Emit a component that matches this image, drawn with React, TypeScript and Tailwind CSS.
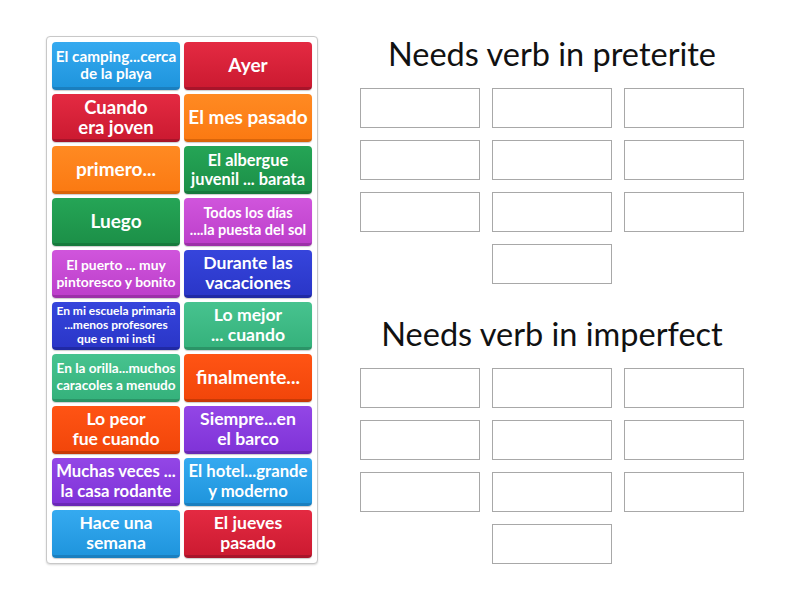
import React from "react";

type Tile = { text: string[]; color: string; size: string };

const C = {
  blue: "bg-gradient-to-b from-[#35aaf0] to-[#1f95dd] border-b-[3px] border-[#1a7fbf]",
  red: "bg-gradient-to-b from-[#e42a42] to-[#cc1a31] border-b-[3px] border-[#a8142a]",
  orange: "bg-gradient-to-b from-[#ff8a22] to-[#fb7a12] border-b-[3px] border-[#d9650a]",
  green: "bg-gradient-to-b from-[#25a556] to-[#1c9048] border-b-[3px] border-[#167a3c]",
  magenta: "bg-gradient-to-b from-[#d055dc] to-[#bd3fcb] border-b-[3px] border-[#9c31a8]",
  navy: "bg-gradient-to-b from-[#3645dc] to-[#2a36c8] border-b-[3px] border-[#2029a4]",
  mint: "bg-gradient-to-b from-[#47c38f] to-[#35b27c] border-b-[3px] border-[#2b9467]",
  redorange: "bg-gradient-to-b from-[#ff5414] to-[#f2460a] border-b-[3px] border-[#c83a06]",
  purple: "bg-gradient-to-b from-[#9346e6] to-[#8033d8] border-b-[3px] border-[#6a28b6]",
};

const tiles: Tile[] = [
  { text: ["El camping...cerca", "de la playa"], color: C.blue, size: "text-[15.3px] leading-[17px]" },
  { text: ["Ayer"], color: C.red, size: "text-[19px] leading-[20px]" },
  { text: ["Cuando", "era joven"], color: C.red, size: "text-[18.5px] leading-[20px]" },
  { text: ["El mes pasado"], color: C.orange, size: "text-[19px] leading-[20px]" },
  { text: ["primero..."], color: C.orange, size: "text-[19px] leading-[20px]" },
  { text: ["El albergue", "juvenil ... barata"], color: C.green, size: "text-[16.4px] leading-[19px]" },
  { text: ["Luego"], color: C.green, size: "text-[19px] leading-[20px]" },
  { text: ["Todos los días", "....la puesta del sol"], color: C.magenta, size: "text-[14.5px] leading-[17px]" },
  { text: ["El puerto ... muy", "pintoresco y bonito"], color: C.magenta, size: "text-[13.9px] leading-[17px]" },
  { text: ["Durante las", "vacaciones"], color: C.navy, size: "text-[17.6px] leading-[20px]" },
  { text: ["En mi escuela primaria", "...menos profesores", "que en mi insti"], color: C.navy, size: "text-[12px] leading-[14px]" },
  { text: ["Lo mejor", "... cuando"], color: C.mint, size: "text-[17.6px] leading-[20px]" },
  { text: ["En la orilla...muchos", "caracoles a menudo"], color: C.mint, size: "text-[13.6px] leading-[17px]" },
  { text: ["finalmente..."], color: C.redorange, size: "text-[19px] leading-[20px]" },
  { text: ["Lo peor", "fue cuando"], color: C.redorange, size: "text-[17.6px] leading-[20px]" },
  { text: ["Siempre...en", "el barco"], color: C.purple, size: "text-[17.6px] leading-[20px]" },
  { text: ["Muchas veces ...", "la casa rodante"], color: C.purple, size: "text-[16.7px] leading-[20px]" },
  { text: ["El hotel...grande", "y moderno"], color: C.blue, size: "text-[16.7px] leading-[20px]" },
  { text: ["Hace una", "semana"], color: C.blue, size: "text-[17.6px] leading-[20px]" },
  { text: ["El jueves", "pasado"], color: C.red, size: "text-[17.6px] leading-[20px]" },
];

function Slot() {
  return <div className="w-[120px] h-[40px] border border-[#a8a8a8] bg-white" />;
}

function Group({ title }: { title: string }) {
  return (
    <div className="flex flex-col items-center">
      <div className="h-[48px] pb-[12px] flex items-center justify-center text-[32.5px] text-[#111] font-normal">
        {title}
      </div>
      <div className="grid grid-cols-[120px_120px_120px] gap-x-[12px] gap-y-[12px] mt-[4px]">
        {Array.from({ length: 9 }).map((_, i) => (
          <Slot key={i} />
        ))}
        <div />
        <Slot />
      </div>
    </div>
  );
}

export default function App() {
  return (
    <div className="w-[800px] h-[600px] bg-white relative" style={{ fontFamily: "Lato, 'Open Sans', sans-serif" }}>
      <div className="flex pt-[36px] pl-[46px]">
        <div className="w-[272px] h-[528px] border border-[#c8c8c8] rounded-[4px] bg-white p-[5px] shadow-[0_1px_2px_rgba(0,0,0,0.15)]">
          <div className="grid grid-cols-[128px_128px] gap-x-[4px] gap-y-[4px]">
            {tiles.map((t, i) => (
              <div
                key={i}
                className={`h-[48px] rounded-[4px] flex flex-col items-center justify-center text-white font-bold text-center shadow-[0_1px_1px_rgba(0,0,0,0.2)] ${t.color} ${t.size}`}
              >
                {t.text.map((l, j) => (
                  <div key={j} className="whitespace-nowrap">{l}</div>
                ))}
              </div>
            ))}
          </div>
        </div>
        <div className="ml-[42px] flex flex-col">
          <div className="mt-[0px]">
            <Group title="Needs verb in preterite" />
          </div>
          <div className="mt-[32px]">
            <Group title="Needs verb in imperfect" />
          </div>
        </div>
      </div>
    </div>
  );
}
